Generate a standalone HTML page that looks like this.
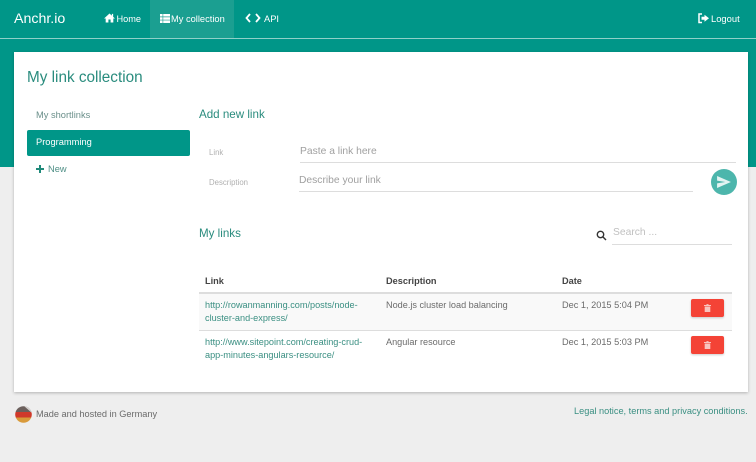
<!DOCTYPE html>
<html><head><meta charset="utf-8">
<style>
html,body{margin:0;padding:0}
body{width:756px;height:462px;overflow:hidden;position:relative;background:#eee;font-family:"Liberation Sans",sans-serif;font-size:10px;color:#6b6b6b}
.a{position:absolute;white-space:nowrap}
.teal{color:#2a8c7e}
svg{position:absolute;display:block}
</style></head><body>
<div class="a" style="left:0;top:0;width:756px;height:167px;background:#009688"></div>
<div class="a" style="left:0;top:38px;width:756px;height:1px;background:#8fd0c8"></div>
<div class="a" style="left:150px;top:0;width:84px;height:38px;background:#1b9f91"></div>
<div class="a" style="left:14px;top:10px;font-size:14.200px;line-height:18px;color:#fff">Anchr.io</div>
<svg style="left:104px;top:13px" width="11" height="10" viewBox="0 0 12 11"><path fill="#fff" d="M6 0.500L0 6h1.800v4.500h3V7.200h2.400v3.300h3V6H12L10 4.200V1H8.600v1.900z"/></svg>
<div class="a" style="left:116.500px;top:13px;font-size:9.200px;line-height:12px;color:#fff">Home</div>
<svg style="left:160px;top:14px" width="10" height="9" viewBox="0 0 10 9"><path fill="#fff" d="M0 0h2.600v2.500H0zM3.200 0H10v2.500H3.200zM0 3.200h2.600v2.500H0zM3.200 3.200H10v2.500H3.200zM0 6.400h2.600V9H0zM3.200 6.400H10V9H3.200z"/></svg>
<div class="a" style="left:171px;top:13px;font-size:9.300px;line-height:12px;color:#fff">My collection</div>
<svg style="left:245px;top:13px" width="16" height="10" viewBox="0 0 16 10" fill="none" stroke="#fff" stroke-width="1.800"><path d="M5 1L1.500 5 5 9M11 1l3.500 4L11 9"/></svg>
<div class="a" style="left:264px;top:13px;font-size:9.300px;line-height:12px;color:#fff">API</div>
<svg style="left:698px;top:13px" width="11" height="11" viewBox="0 0 11 11"><path fill="none" stroke="#fff" stroke-width="1.500" d="M4 1H1v8.500h3"/><path fill="#fff" d="M3.500 3.800h3V1.800L11 5.300 6.500 8.800V6.800h-3z"/></svg>
<div class="a" style="left:711px;top:13px;font-size:9.400px;line-height:12px;color:#fff">Logout</div>

<div class="a" style="left:14px;top:52px;width:734px;height:340px;background:#fff;box-shadow:0 1px 3px rgba(0,0,0,.25)"></div>
<div class="a teal" style="left:27px;top:68px;font-size:15.300px;line-height:19px">My link collection</div>

<div class="a" style="left:36px;top:109px;font-size:9.300px;line-height:13px;color:#6a8f8a">My shortlinks</div>
<div class="a" style="left:27px;top:130px;width:163px;height:26px;background:#009688;border-radius:2px"></div>
<div class="a" style="left:36px;top:136px;font-size:9.300px;line-height:13px;color:#fff">Programming</div>
<svg style="left:36px;top:165px" width="8" height="8" viewBox="0 0 8 8"><path fill="#1f8a7a" d="M3 0h2v3h3v2H5v3H3V5H0V3h3z"/></svg>
<div class="a" style="left:48px;top:163px;font-size:9.300px;line-height:13px;color:#4f8f86">New</div>

<div class="a teal" style="left:199px;top:107px;font-size:11.600px;line-height:15px">Add new link</div>
<div class="a" style="left:209px;top:147px;font-size:7.800px;line-height:11px;color:#b0b0b0">Link</div>
<div class="a" style="left:209px;top:177px;font-size:7.800px;line-height:11px;color:#b0b0b0">Description</div>
<div class="a" style="left:300px;top:145px;font-size:10.300px;line-height:13px;color:#a0a0a0">Paste a link here</div>
<div class="a" style="left:300px;top:162px;width:436px;height:1px;background:#ddd"></div>
<div class="a" style="left:299px;top:174px;font-size:10.300px;line-height:13px;color:#a0a0a0">Describe your link</div>
<div class="a" style="left:299px;top:191px;width:394px;height:1px;background:#ddd"></div>
<div class="a" style="left:711px;top:169px;width:26px;height:26px;border-radius:50%;background:#4db6ac"></div>
<svg style="left:717px;top:176px" width="14" height="12" viewBox="0 0 15 13"><path fill="#e4f4f2" d="M0 0l15 6.500L0 13V8l9-1.500L0 5z"/></svg>

<div class="a teal" style="left:199px;top:226px;font-size:11.600px;line-height:15px">My links</div>
<svg style="left:596px;top:230px" width="11" height="11" viewBox="0 0 11 11" fill="none" stroke="#333" stroke-width="1.400"><circle cx="4.500" cy="4.500" r="3.200"/><path d="M7 7l3 3"/></svg>
<div class="a" style="left:613px;top:226px;font-size:10.300px;line-height:13px;color:#c0c0c0">Search ...</div>
<div class="a" style="left:612px;top:244px;width:120px;height:1px;background:#ddd"></div>

<div class="a" style="left:199px;top:293px;width:533px;height:37px;background:#f9f9f9"></div>
<div class="a" style="left:199px;top:292px;width:533px;height:2px;background:#ddd"></div>
<div class="a" style="left:199px;top:330px;width:533px;height:1px;background:#ddd"></div>
<div class="a" style="left:205px;top:275px;font-size:9.200px;line-height:12px;font-weight:bold;color:#444">Link</div>
<div class="a" style="left:386px;top:275px;font-size:9.200px;line-height:12px;font-weight:bold;color:#444">Description</div>
<div class="a" style="left:562px;top:275px;font-size:9.200px;line-height:12px;font-weight:bold;color:#444">Date</div>

<div class="a" style="left:205px;top:299px;font-size:9.150px;line-height:13px;color:#3a8f82">http://rowanmanning.com/posts/node-<br>cluster-and-express/</div>
<div class="a" style="left:386px;top:299px;font-size:9.150px;line-height:13px">Node.js cluster load balancing</div>
<div class="a" style="left:562px;top:299px;font-size:9.200px;line-height:13px">Dec 1, 2015 5:04 PM</div>
<div class="a" style="left:691px;top:299px;width:33px;height:18px;background:#f44336;border-radius:2px;box-shadow:0 1px 2px rgba(0,0,0,.2)"></div>
<svg style="left:704px;top:304px" width="7" height="8" viewBox="0 0 8 9"><path fill="#f8c4bf" d="M2.800 0h2.400v1H8v1.200H0V1h2.800zM.8 2.800h6.400V9H.8z"/></svg>

<div class="a" style="left:205px;top:336px;font-size:9.150px;line-height:13px;color:#3a8f82">http://www.sitepoint.com/creating-crud-<br>app-minutes-angulars-resource/</div>
<div class="a" style="left:386px;top:336px;font-size:9.150px;line-height:13px">Angular resource</div>
<div class="a" style="left:562px;top:336px;font-size:9.200px;line-height:13px">Dec 1, 2015 5:03 PM</div>
<div class="a" style="left:691px;top:336px;width:33px;height:18px;background:#f44336;border-radius:2px;box-shadow:0 1px 2px rgba(0,0,0,.2)"></div>
<svg style="left:704px;top:341px" width="7" height="8" viewBox="0 0 8 9"><path fill="#f8c4bf" d="M2.800 0h2.400v1H8v1.200H0V1h2.800zM.8 2.800h6.400V9H.8z"/></svg>

<svg style="left:15px;top:406px" width="17" height="17" viewBox="0 0 17 17"><defs><clipPath id="c"><circle cx="8.500" cy="8.500" r="8.300"/></clipPath></defs><g clip-path="url(#c)"><rect width="17" height="6" fill="#6b5f5c"/><rect y="6" width="17" height="5.500" fill="#d0392b"/><rect y="11.500" width="17" height="5.500" fill="#d99a3a"/><path d="M9 0L17 0 17 7z" fill="#d8d4d2"/></g></svg>
<div class="a" style="left:36px;top:408px;font-size:9.200px;line-height:13px">Made and hosted in Germany</div>
<div class="a" style="left:574px;top:405px;font-size:9.200px;line-height:13px;color:#3a8f82">Legal notice, terms and privacy conditions.</div>
</body></html>
